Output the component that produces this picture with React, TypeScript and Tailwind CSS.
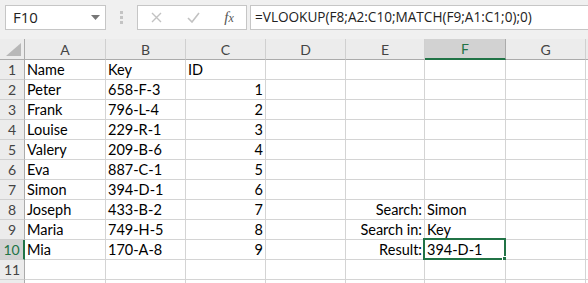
import React from 'react';

const cols = ['A', 'B', 'C', 'D', 'E', 'F', 'G', ''];

type Row = { a?: string; b?: string; c?: string; e?: string; f?: string };

const rows: Row[] = [
  { a: 'Name', b: 'Key', c: 'ID' },
  { a: 'Peter', b: '658-F-3', c: '1' },
  { a: 'Frank', b: '796-L-4', c: '2' },
  { a: 'Louise', b: '229-R-1', c: '3' },
  { a: 'Valery', b: '209-B-6', c: '4' },
  { a: 'Eva', b: '887-C-1', c: '5' },
  { a: 'Simon', b: '394-D-1', c: '6' },
  { a: 'Joseph', b: '433-B-2', c: '7', e: 'Search:', f: 'Simon' },
  { a: 'Maria', b: '749-H-5', c: '8', e: 'Search in:', f: 'Key' },
  { a: 'Mia', b: '170-A-8', c: '9', e: 'Result:', f: '394-D-1' },
  {},
  {},
];

const cellFont = { fontFamily: 'Lato, "Open Sans", sans-serif' };

function Cell({ text, align = 'left', selected = false }: { text?: string; align?: 'left' | 'right'; selected?: boolean }) {
  return (
    <div
      className={
        'relative h-[20px] border-r border-b border-[#d4d4d4] bg-white flex items-end pb-[1px] text-[14.5px] leading-[17px] text-black whitespace-nowrap ' +
        (align === 'right' ? 'justify-end pr-[2px]' : 'pl-[2px]')
      }
    >
      <span className={align === 'right' ? 'absolute right-[2px] bottom-[1px]' : ''}>{text}</span>
      {selected && (
        <>
          <div className="absolute -left-[2px] -top-[2px] right-[-1px] bottom-[-1px] border-2 border-[#217346]" />
          <div className="absolute right-[-3px] bottom-[-3px] w-[6px] h-[6px] bg-[#217346] border border-white" />
        </>
      )}
    </div>
  );
}

export default function App() {
  return (
    <div className="w-[588px] h-[283px] overflow-hidden bg-[#f0f0f0] select-none" style={cellFont}>
      {/* formula bar */}
      <div className="h-[39px] flex items-start pt-[5px] pl-[5px]">
        <div className="w-[101px] h-[25px] bg-white border border-[#c6c6c6] flex items-center justify-between pl-[7px] pr-[5px]">
          <span className="text-[15px] text-[#222]" style={{ fontFamily: '"Open Sans", sans-serif' }}>F10</span>
          <svg width="9" height="5" viewBox="0 0 9 5">
            <path d="M0 0h9L4.5 5z" fill="#777" />
          </svg>
        </div>
        <div className="w-[31px] h-[25px] flex items-center justify-center">
          <svg width="3" height="13" viewBox="0 0 3 13">
            <rect x="0" y="0" width="3" height="3" fill="#c4c4c4" />
            <rect x="0" y="5" width="3" height="3" fill="#c4c4c4" />
            <rect x="0" y="10" width="3" height="3" fill="#c4c4c4" />
          </svg>
        </div>
        <div className="w-[110px] h-[25px] bg-white border border-[#c6c6c6] flex items-center">
          <div className="w-[36px] flex justify-center">
            <svg width="11" height="11" viewBox="0 0 11 11">
              <path d="M1 1l9 9M10 1l-9 9" stroke="#c2c2c2" strokeWidth="1.4" />
            </svg>
          </div>
          <div className="w-[38px] flex justify-center">
            <svg width="13" height="11" viewBox="0 0 13 11">
              <path d="M1 6l4 4 7-9" stroke="#c2c2c2" strokeWidth="1.6" fill="none" />
            </svg>
          </div>
          <div className="flex-1 flex justify-center">
            <span className="text-[15px] italic text-[#555]" style={{ fontFamily: '"Liberation Serif", serif' }}>
              f<span className="text-[12px]">x</span>
            </span>
          </div>
        </div>
        <div className="ml-[3px] flex-1 h-[25px] bg-white border border-[#c6c6c6] border-r-0 flex items-center pl-[4px]">
          <span className="text-[13.6px] text-[#222] whitespace-nowrap" style={{ fontFamily: '"Open Sans", sans-serif' }}>
            =VLOOKUP(F8;A2:C10;MATCH(F9;A1:C1;0);0)
          </span>
        </div>
      </div>

      {/* sheet */}
      <div className="grid grid-cols-[25px_81px_80px_80px_80px_79px_81px_80px_1fr]">
        {/* header */}
        <div className="h-[21px] bg-[#ececec] border-r border-b border-[#ababab] relative">
          <svg className="absolute right-[3px] bottom-[3px]" width="15" height="13" viewBox="0 0 15 13">
            <path d="M15 0V13H0z" fill="#b8b8b8" />
          </svg>
        </div>
        {cols.map((c, i) => (
          <div
            key={i}
            className={
              'h-[21px] flex items-center justify-center text-[14px] border-r ' +
              (c === 'F'
                ? 'bg-[#d2d2d2] border-[#ababab] text-[#217346] border-b-2 border-b-[#217346]'
                : 'bg-[#ececec] border-[#d0d0d0] text-[#444] border-b border-b-[#ababab]')
            }
          >
            {c}
          </div>
        ))}

        {rows.map((r, i) => {
          const n = i + 1;
          const sel = n === 10;
          return (
            <React.Fragment key={n}>
              <div
                className={
                  'h-[20px] flex items-center justify-center text-[14px] border-b border-[#d0d0d0] ' +
                  (sel
                    ? 'bg-[#d2d2d2] text-[#217346] border-r-2 border-r-[#217346]'
                    : 'bg-[#ececec] text-[#444] border-r border-r-[#ababab]')
                }
              >
                {n <= 11 ? n : ''}
              </div>
              <Cell text={r.a} />
              <Cell text={r.b} />
              <Cell text={r.c} align={r.c && r.c !== 'ID' ? 'right' : 'left'} />
              <Cell />
              <Cell text={r.e} align="right" />
              <Cell text={r.f} selected={sel} />
              <Cell />
              <Cell />
            </React.Fragment>
          );
        })}
      </div>
    </div>
  );
}
